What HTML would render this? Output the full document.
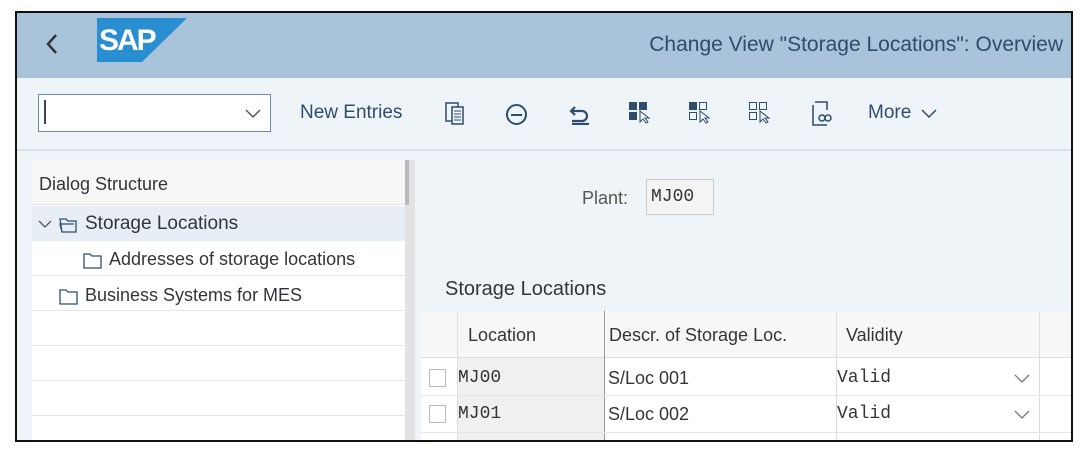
<!DOCTYPE html><html><head><style>
*{margin:0;padding:0;box-sizing:border-box}
body{width:1084px;height:452px;background:#fff;font-family:"Liberation Sans",sans-serif;position:relative;overflow:hidden}
.frame{position:absolute;left:15px;top:11px;width:1058px;height:431px;border:2px solid #111;overflow:hidden;background:#eff4f9}
.a{position:absolute}
.t{color:#32363a;font-size:19px;white-space:nowrap}
.mono{font-family:"Liberation Mono",monospace}
</style></head><body>
<div class="frame">
<div class="a" style="left:0;top:0;width:1056px;height:65px;background:#a9c3da"></div>
<svg class="a" style="left:28px;top:20px" width="14" height="22"><path d="M11 2 L3 11 L11 20" stroke="#32363a" stroke-width="2.5" fill="none"/></svg>
<svg class="a" style="left:80px;top:5px" width="90" height="44"><polygon points="0,0 90,0 45,44 0,44" fill="#2a8fd0"/><text x="2" y="32" font-family="Liberation Sans" font-weight="bold" font-size="30" fill="#fff" letter-spacing="-2">SAP</text></svg>
<div class="a t" style="right:8px;top:20px;font-size:21px;color:#2d4d6b">Change View "Storage Locations": Overview</div>
<div class="a" style="left:0;top:136px;width:1056px;height:2px;background:#d8e2ec"></div>
<div class="a" style="left:21px;top:81px;width:233px;height:38px;background:#fff;border:1px solid #6a8bab"></div>
<div class="a" style="left:27px;top:87px;width:2px;height:24px;background:#444"></div>
<svg class="a" style="left:228px;top:96px" width="16" height="10"><path d="M1 1 L8 8 L15 1" stroke="#556" stroke-width="1.5" fill="none"/></svg>
<div class="a t" style="left:283px;top:89px;color:#2d4d6b">New Entries</div>
<svg class="a" style="left:428px;top:89px" width="20" height="24"><rect x="1" y="1" width="12" height="18" fill="none" stroke="#2d4d6b" stroke-width="1.5"/><rect x="7" y="5" width="11" height="17" fill="#eff4f9" stroke="#2d4d6b" stroke-width="1.5"/><path d="M9 9h7M9 12h7M9 15h7M9 18h7" stroke="#2d4d6b"/></svg>
<div class="a" style="left:489px;top:91px;width:21px;height:21px;border:2px solid #2d4d6b;border-radius:50%"></div><div class="a" style="left:494px;top:101px;width:11px;height:2px;background:#2d4d6b"></div>
<svg class="a" style="left:552px;top:92px" width="22" height="20"><path d="M6 2 L2 6 L6 10 M2 6 H13 A5 5 0 0 1 13 16 H3 M3 19 H20" stroke="#2d4d6b" stroke-width="2.2" fill="none"/></svg>
<div class="a" style="left:612px;top:89px;width:8px;height:8px;background:#2d4d6b"></div><div class="a" style="left:622px;top:89px;width:8px;height:8px;background:#2d4d6b"></div><div class="a" style="left:612px;top:99px;width:8px;height:8px;background:#2d4d6b"></div>
<div class="a" style="left:672px;top:89px;width:8px;height:8px;background:#2d4d6b"></div><div class="a" style="left:682px;top:89px;width:8px;height:8px;border:1.5px solid #2d4d6b"></div><div class="a" style="left:672px;top:99px;width:8px;height:8px;border:1.5px solid #2d4d6b"></div>
<div class="a" style="left:732px;top:89px;width:8px;height:8px;border:1.5px solid #2d4d6b"></div><div class="a" style="left:742px;top:89px;width:8px;height:8px;border:1.5px solid #2d4d6b"></div><div class="a" style="left:732px;top:99px;width:8px;height:8px;border:1.5px solid #2d4d6b"></div>
<svg class="a" style="left:622px;top:97px" width="12" height="14"><path d="M1 1 L1 12 L4 9 L7 13 L9 12 L6 8 L10 8 Z" fill="#eff4f9" stroke="#2d4d6b" stroke-width="1"/></svg>
<svg class="a" style="left:682px;top:97px" width="12" height="14"><path d="M1 1 L1 12 L4 9 L7 13 L9 12 L6 8 L10 8 Z" fill="#eff4f9" stroke="#2d4d6b" stroke-width="1"/></svg>
<svg class="a" style="left:742px;top:97px" width="12" height="14"><path d="M1 1 L1 12 L4 9 L7 13 L9 12 L6 8 L10 8 Z" fill="#eff4f9" stroke="#2d4d6b" stroke-width="1"/></svg>
<svg class="a" style="left:793px;top:88px" width="24" height="26"><path d="M5 1 H17 V9 M3 4 V24 H17" stroke="#2d4d6b" stroke-width="1.5" fill="none"/><circle cx="12" cy="17" r="3" fill="none" stroke="#2d4d6b" stroke-width="1.5"/><circle cx="18" cy="17" r="3" fill="none" stroke="#2d4d6b" stroke-width="1.5"/></svg>
<div class="a t" style="left:851px;top:89px;color:#2d4d6b">More</div>
<svg class="a" style="left:904px;top:96px" width="16" height="10"><path d="M1 1 L8 8 L15 1" stroke="#2d4d6b" stroke-width="1.5" fill="none"/></svg>
<!-- left panel -->
<div class="a" style="left:15px;top:147px;width:373px;height:290px;background:#fff"></div>
<div class="a" style="left:15px;top:147px;width:373px;height:45px;background:#f7f7f7;border-bottom:1px solid #e5e5e5"></div>
<div class="a" style="left:388px;top:147px;width:10px;height:290px;background:#e3e3e3"></div>
<div class="a" style="left:388px;top:147px;width:4px;height:45px;background:#bbb"></div>
<div class="a t" style="left:22px;top:161px;font-size:18px">Dialog Structure</div>
<div class="a" style="left:15px;top:193px;width:373px;height:35px;background:#e7eef6"></div>
<svg class="a" style="left:21px;top:203px" width="50" height="18"><path d="M1 5 L7 11 L13 5" stroke="#556" stroke-width="1.3" fill="none"/><path d="M22 3 H28 L30 5 H38 V16 H24 Z M24 16 L22 8 H36" stroke="#2d4d6b" stroke-width="1.3" fill="none"/></svg>
<div class="a t" style="left:68px;top:200px;font-size:19px">Storage Locations</div>
<div class="a" style="left:15px;top:262px;width:373px;height:1px;background:#e6e6e6"></div>
<svg class="a" style="left:66px;top:239px" width="20" height="18"><path d="M1 2 H7 L9 4 H18 V16 H1 Z" stroke="#2d4d6b" stroke-width="1.3" fill="none"/></svg>
<div class="a t" style="left:92px;top:236px;font-size:18px">Addresses of storage locations</div>
<svg class="a" style="left:42px;top:275px" width="20" height="18"><path d="M1 2 H7 L9 4 H18 V16 H1 Z" stroke="#2d4d6b" stroke-width="1.3" fill="none"/></svg>
<div class="a t" style="left:68px;top:272px;font-size:18px">Business Systems for MES</div>
<div class="a" style="left:15px;top:297px;width:373px;height:1px;background:#e6e6e6"></div>
<div class="a" style="left:15px;top:332px;width:373px;height:1px;background:#e6e6e6"></div>
<div class="a" style="left:15px;top:367px;width:373px;height:1px;background:#e6e6e6"></div>
<div class="a" style="left:15px;top:402px;width:373px;height:1px;background:#e6e6e6"></div>
<!-- right -->
<div class="a t" style="left:565px;top:175px;font-size:18px;color:#555">Plant:</div>
<div class="a" style="left:629px;top:166px;width:68px;height:36px;border:1px solid #ccc;background:#f4f4f4"></div>
<div class="a t mono" style="left:634px;top:174px;font-size:18px">MJ00</div>
<div class="a t" style="left:428px;top:265px;font-size:20px">Storage Locations</div>
<div class="a" style="left:404px;top:298px;width:652px;height:140px;background:#fff;border-top:1px solid #ddd"></div>
<div class="a" style="left:404px;top:298px;width:652px;height:47px;background:#f7f7f7;border-bottom:1px solid #ddd"></div>
<div class="a" style="left:440px;top:345px;width:147px;height:95px;background:#f0f0f0"></div>
<div class="a" style="left:440px;top:298px;width:1px;height:140px;background:#ddd"></div>
<div class="a" style="left:587px;top:298px;width:1px;height:140px;background:#999"></div>
<div class="a" style="left:819px;top:298px;width:1px;height:140px;background:#ddd"></div>
<div class="a" style="left:1022px;top:298px;width:1px;height:140px;background:#ddd"></div>
<div class="a" style="left:404px;top:382px;width:652px;height:1px;background:#e6e6e6"></div>
<div class="a" style="left:404px;top:419px;width:652px;height:1px;background:#e6e6e6"></div>
<div class="a t" style="left:451px;top:312px;font-size:18px">Location</div>
<div class="a t" style="left:592px;top:312px;font-size:18px">Descr. of Storage Loc.</div>
<div class="a t" style="left:829px;top:312px;font-size:18px">Validity</div>
<div class="a" style="left:412px;top:356px;width:17px;height:18px;border:1px solid #bbb;background:#fff"></div>
<div class="a" style="left:412px;top:392px;width:17px;height:18px;border:1px solid #bbb;background:#fff"></div>
<div class="a t mono" style="left:441px;top:355px;font-size:18px">MJ00</div>
<div class="a t mono" style="left:441px;top:391px;font-size:18px">MJ01</div>
<div class="a t" style="left:591px;top:355px;font-size:18px">S/Loc 001</div>
<div class="a t" style="left:591px;top:391px;font-size:18px">S/Loc 002</div>
<div class="a t mono" style="left:820px;top:355px;font-size:18px">Valid</div>
<div class="a t mono" style="left:820px;top:391px;font-size:18px">Valid</div>
<svg class="a" style="left:997px;top:361px" width="16" height="10"><path d="M1 1 L8 8 L15 1" stroke="#777" stroke-width="1.3" fill="none"/></svg>
<svg class="a" style="left:997px;top:397px" width="16" height="10"><path d="M1 1 L8 8 L15 1" stroke="#777" stroke-width="1.3" fill="none"/></svg>
</div>
</body></html>
